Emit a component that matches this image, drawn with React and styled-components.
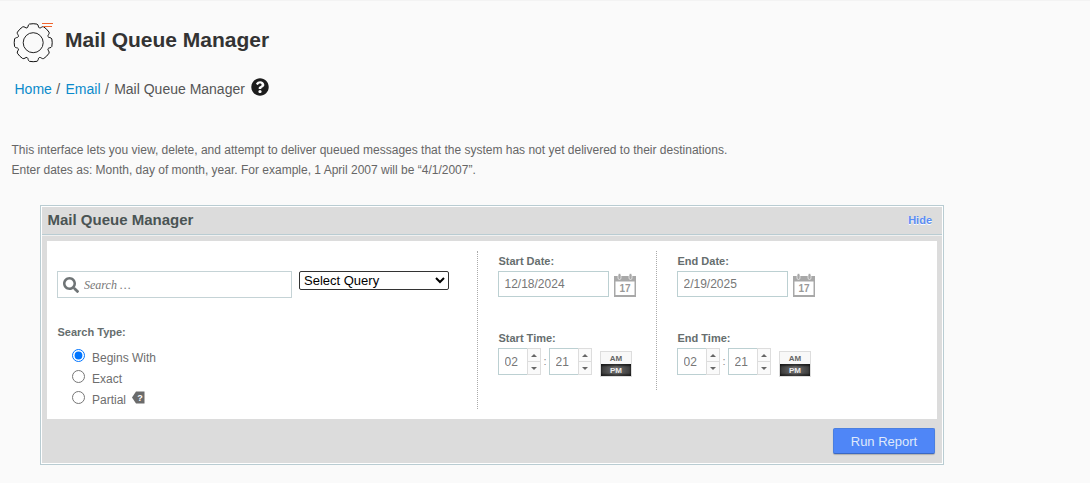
import React from "react";
import styled, { createGlobalStyle } from "styled-components";
import { FaSearch, FaQuestionCircle } from "react-icons/fa";

const GlobalStyle = createGlobalStyle`
  html, body {
    margin: 0;
    padding: 0;
    background: #fafafa;
    font-family: "Liberation Sans", Arial, sans-serif;
    color: #666;
  }
  * { box-sizing: border-box; }
`;

const Page = styled.div`
  width: 1090px;
  height: 483px;
  overflow: hidden;
  border-top: 1px solid #f3f3f3;
`;

const TitleRow = styled.div`
  display: flex;
  align-items: center;
  gap: 11px;
  padding: 21px 0 0 13px;
  height: 62px;
`;

const Title = styled.h1`
  margin: 0 0 6px;
  font-size: 21px;
  font-weight: 700;
  color: #333;
  line-height: 36px;
`;

const Crumbs = styled.div`
  display: flex;
  align-items: center;
  height: 20px;
  margin-top: 16px;
  padding-left: 14.5px;
  font-size: 14px;
  color: #555;
`;

const CrumbLink = styled.a`
  color: #0a8acb;
  text-decoration: none;
`;

const Sep = styled.span`
  margin: 0 5.25px 0 4.5px;
`;

const HelpIcon = styled(FaQuestionCircle)`
  color: #1c1c1c;
  font-size: 18px;
  margin: -4px 0 0 6px;
`;

const Intro = styled.div`
  margin-top: 41px;
  padding-left: 11.5px;
  font-size: 12px;
  line-height: 20px;
  color: #666;
`;

const Panel = styled.section`
  width: 904px;
  height: 260px;
  margin: 25px 0 0 40px;
  border: 1px solid #b9ccd2;
  padding: 1px;
  background: #fff;
`;

const PanelInner = styled.div`
  height: 100%;
  background: #dcdcdc;
  display: flex;
  flex-direction: column;
`;

const PanelHead = styled.div`
  display: flex;
  align-items: center;
  justify-content: space-between;
  height: 28px;
  padding: 0 10px 2px 5.5px;
  border-bottom: 1px solid #b9ccd2;
  box-shadow: 0 1px 0 #f0f0f0;
`;

const PanelTitle = styled.h2`
  margin: 0;
  font-size: 15px;
  font-weight: 700;
  color: #4a5454;
`;

const HideLink = styled.a`
  font-size: 11px;
  font-weight: 700;
  color: #5b8df5;
  text-shadow: 0 1px 0 #fff;
`;

const PanelBody = styled.div`
  display: grid;
  grid-template-columns: 431px 179px 1fr;
  align-items: start;
  height: 178px;
  margin: 6px 5px 0;
  padding: 10px 0;
  background: #fff;
`;

const LeftCol = styled.div`
  height: 158px;
  border-right: 1px dotted #aaa;
  padding: 20px 0 0 10px;
`;

const QueryRow = styled.div`
  display: flex;
  align-items: flex-start;
  gap: 7px;
`;

const SearchBox = styled.div`
  display: flex;
  align-items: center;
  gap: 5px;
  width: 235px;
  height: 27px;
  padding-left: 5px;
  border: 1px solid #c5d3d6;
  background: #fff;
`;

const SearchGlyph = styled(FaSearch)`
  color: #6f7476;
  font-size: 16px;
  flex: none;
`;

const SearchInput = styled.input`
  flex: 1;
  min-width: 0;
  border: 0;
  outline: 0;
  padding: 2px 0 0;
  font: italic 12px "Liberation Serif", serif;
  &::placeholder { color: #777; opacity: 1; }
`;

const QuerySelect = styled.select`
  width: 150px;
  height: 19px;
  font: 13px "Liberation Sans", Arial, sans-serif;
  color: #000;
  background: #fff;
  border: 1px solid #333;
  border-radius: 2px;
`;

const FieldLabel = styled.div`
  padding-left: 0.5px;
  font-size: 11px;
  font-weight: 700;
  line-height: 13px;
  color: #666e6e;
`;

const SearchTypeLabel = styled(FieldLabel)`
  margin-top: 28px;
`;

const RadioList = styled.div`
  display: flex;
  flex-direction: column;
  margin: 8px 0 0 15px;
`;

const RadioRow = styled.label`
  display: flex;
  align-items: center;
  height: 21px;
  font-size: 12px;
  color: #6e6e6e;
`;

const Radio = styled.input`
  width: 13px;
  height: 13px;
  margin: 0 7px 5px 0;
`;

const TagIcon = styled.svg`
  width: 13px;
  height: 13px;
  margin: -4px 0 0 5.5px;
`;

const DateCol = styled.div`
  height: 139px;
  padding: 4px 0 0 20px;
  border-right: ${(p) => (p.$divided ? "1px dotted #aaa" : "0")};
`;

const DateRow = styled.div`
  display: flex;
  align-items: flex-start;
  gap: 5px;
  margin-top: 3px;
`;

const DateInput = styled.input`
  width: 111px;
  height: 26px;
  padding: 0 5.5px;
  border: 1px solid #bcd0d2;
  outline: 0;
  font: 12px "Liberation Sans", Arial, sans-serif;
  color: #777;
  background: #fff;
`;

const CalendarIcon = styled.svg`
  width: 22px;
  height: 24px;
  margin-top: 2px;
`;

const TimeLabel = styled(FieldLabel)`
  margin-top: 35px;
`;

const TimeRow = styled.div`
  display: flex;
  align-items: flex-start;
  margin-top: 3px;
`;

const TimeInput = styled.input`
  width: 30px;
  height: 27px;
  padding: 0 0 0 5.5px;
  border: 1px solid #bcd0d2;
  outline: 0;
  font: 12px "Liberation Sans", Arial, sans-serif;
  color: #777;
`;

const Spinner = styled.div`
  display: flex;
  flex-direction: column;
  width: 14px;
  height: 27px;
  margin-left: -1px;
  border: 1px solid #ddd;
  background: #fafafa;
`;

const SpinButton = styled.div`
  flex: 1;
  display: flex;
  align-items: center;
  justify-content: center;
  & + & { border-top: 1px solid #ddd; }
  &::before {
    content: "";
    border-left: 3px solid transparent;
    border-right: 3px solid transparent;
    ${(p) => (p.$down ? "border-top: 3px solid #666;" : "border-bottom: 3px solid #666;")}
  }
`;

const Colon = styled.span`
  width: 8px;
  margin-top: 7px;
  text-align: center;
  font-size: 11px;
  color: #888;
`;

const Meridiem = styled.div`
  display: flex;
  flex-direction: column;
  width: 32px;
  height: 26px;
  margin: 3px 0 0 8px;
  border: 1px solid #ddd;
  font-size: 8px;
  font-weight: 700;
`;

const MeridiemOption = styled.div`
  flex: 1;
  display: flex;
  align-items: center;
  justify-content: center;
  color: ${(p) => (p.$active ? "#eee" : "#666")};
  background: ${(p) => (p.$active ? "linear-gradient(90deg, #3a3a3a 0%, #707070 50%, #3a3a3a 100%)" : "#f8f8f8")};
  box-shadow: ${(p) => (p.$active ? "inset 0 2px 2px rgba(0, 0, 0, 0.6), inset 0 -2px 2px rgba(0, 0, 0, 0.5)" : "none")};
`;

const PanelFoot = styled.div`
  flex: 1;
  display: flex;
  justify-content: flex-end;
  padding: 9px 7px 0 0;
`;

const RunButton = styled.button`
  width: 102px;
  height: 26px;
  padding: 0;
  border: 1px solid #4a7fe0;
  border-bottom-color: #3a68c4;
  border-radius: 2px;
  background: #4f86f7;
  color: #dfe9fb;
  font: 13px "Liberation Sans", Arial, sans-serif;
  box-shadow: 0 1px 1px rgba(0, 0, 0, 0.2);
`;

function GearIcon() {
  // eight wide teeth with shallow rounded notches between them
  const cx = 20.2;
  const cy = 20.7;
  const teeth = 8;
  const pt = (ang, r) => `${(cx + Math.cos(ang) * r).toFixed(2)} ${(cy + Math.sin(ang) * r).toFixed(2)}`;
  const step = (Math.PI * 2) / teeth;
  let d = "";
  for (let i = 0; i < teeth; i++) {
    const t = i * step - Math.PI / 2;
    const half = 0.2;
    if (i === 0) d += `M${pt(t - half, 19)}`;
    d += ` Q${pt(t, 19.4)} ${pt(t + half, 19)}`;
    d += ` C${pt(t + half + 0.1, 18.8)} ${pt(t + half + 0.1, 16)} ${pt(t + step / 2, 16)}`;
    d += ` C${pt(t + step - half - 0.1, 16)} ${pt(t + step - half - 0.1, 18.8)} ${pt(t + step - half, 19)}`;
  }
  return (
    <svg width="41" height="41" viewBox="0 0 41 41" fill="none" style={{ flex: "none" }}>
      <path d={d + "Z"} stroke="#111" strokeWidth="1" strokeLinejoin="round" />
      <circle cx={cx} cy={cy} r="10" stroke="#222" strokeWidth="1" />
      <path d="M29 1.500h11M30 4.500h9" stroke="#f0642d" strokeWidth="1" />
    </svg>
  );
}

function Calendar() {
  return (
    <CalendarIcon viewBox="0 0 22 24">
      <path d="M0 3h22v21H0z" fill="#a8a8a8" />
      <rect x="1.500" y="8.500" width="19" height="13.500" fill="#fff" />
      <rect x="4" y="0.500" width="3" height="6" rx="1.500" fill="#a8a8a8" stroke="#fff" strokeWidth="0.6" />
      <rect x="15" y="0.500" width="3" height="6" rx="1.500" fill="#a8a8a8" stroke="#fff" strokeWidth="0.6" />
      <text x="11" y="19" textAnchor="middle" fontSize="10" fontWeight="700" fill="#999" fontFamily="Liberation Sans">17</text>
    </CalendarIcon>
  );
}

function DateTimeColumn({ dateLabel, date, timeLabel, divided }) {
  return (
    <DateCol $divided={divided}>
      <FieldLabel>{dateLabel}</FieldLabel>
      <DateRow>
        <DateInput defaultValue={date} />
        <Calendar />
      </DateRow>
      <TimeLabel>{timeLabel}</TimeLabel>
      <TimeRow>
        <TimeInput defaultValue="02" />
        <Spinner>
          <SpinButton />
          <SpinButton $down />
        </Spinner>
        <Colon>:</Colon>
        <TimeInput defaultValue="21" />
        <Spinner>
          <SpinButton />
          <SpinButton $down />
        </Spinner>
        <Meridiem>
          <MeridiemOption>AM</MeridiemOption>
          <MeridiemOption $active>PM</MeridiemOption>
        </Meridiem>
      </TimeRow>
    </DateCol>
  );
}

export default function App() {
  return (
    <Page>
      <GlobalStyle />
      <TitleRow>
        <GearIcon />
        <Title>Mail Queue Manager</Title>
      </TitleRow>
      <Crumbs>
        <CrumbLink href="#">Home</CrumbLink>
        <Sep>/</Sep>
        <CrumbLink href="#">Email</CrumbLink>
        <Sep>/</Sep>
        Mail Queue Manager
        <HelpIcon />
      </Crumbs>
      <Intro>
        This interface lets you view, delete, and attempt to deliver queued messages that the system has not yet delivered to their destinations.
        <br />
        Enter dates as: Month, day of month, year. For example, 1 April 2007 will be “4/1/2007”.
      </Intro>
      <Panel>
        <PanelInner>
          <PanelHead>
            <PanelTitle>Mail Queue Manager</PanelTitle>
            <HideLink>Hide</HideLink>
          </PanelHead>
          <PanelBody>
            <LeftCol>
              <QueryRow>
                <SearchBox>
                  <SearchGlyph />
                  <SearchInput placeholder="Search …" />
                </SearchBox>
                <QuerySelect defaultValue="">
                  <option value="">Select Query</option>
                </QuerySelect>
              </QueryRow>
              <SearchTypeLabel>Search Type:</SearchTypeLabel>
              <RadioList>
                <RadioRow>
                  <Radio type="radio" name="type" defaultChecked />
                  Begins With
                </RadioRow>
                <RadioRow>
                  <Radio type="radio" name="type" />
                  Exact
                </RadioRow>
                <RadioRow>
                  <Radio type="radio" name="type" />
                  Partial
                  <TagIcon viewBox="0 0 13 13">
                    <path d="M4 0.500h8.500v12H4L0 6.500z" fill="#6b6b6b" />
                    <text x="8" y="9.500" textAnchor="middle" fontSize="9" fontWeight="700" fill="#fff" fontFamily="Liberation Sans">?</text>
                  </TagIcon>
                </RadioRow>
              </RadioList>
            </LeftCol>
            <DateTimeColumn dateLabel="Start Date:" date="12/18/2024" timeLabel="Start Time:" divided />
            <DateTimeColumn dateLabel="End Date:" date="2/19/2025" timeLabel="End Time:" />
          </PanelBody>
          <PanelFoot>
            <RunButton>Run Report</RunButton>
          </PanelFoot>
        </PanelInner>
      </Panel>
    </Page>
  );
}
